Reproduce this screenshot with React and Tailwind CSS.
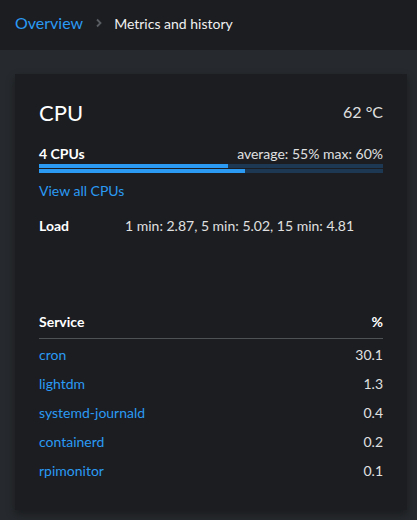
const services = [
  { name: "cron", value: "30.1" },
  { name: "lightdm", value: "1.3" },
  { name: "systemd-journald", value: "0.4" },
  { name: "containerd", value: "0.2" },
  { name: "rpimonitor", value: "0.1" },
];

function Bar({ percent }) {
  return (
    <div className="h-[4px] w-full bg-[#1d3852]">
      <div className="h-full bg-[#2b9af3]" style={{ width: `${percent}%` }} />
    </div>
  );
}

export default function App() {
  return (
    <div className="min-h-[520px] bg-[#26292d] font-['Lato',sans-serif] text-[#e0e0e0]">
      {/* Breadcrumb */}
      <div className="flex h-[50px] items-center bg-[#1b1d21] px-[15px] pb-[4px]">
        <a className="text-[16px] text-[#2b9af3]">Overview</a>
        <svg className="ml-[13px] mr-[12px] h-[10px] w-[6px] text-[#5a5e63]" viewBox="0 0 6 10">
          <path d="M1 1.5 L4.5 5 L1 8.5" fill="none" stroke="currentColor" strokeWidth="1.8" />
        </svg>
        <span className="text-[14px] text-[#f0f0f0]">Metrics and history</span>
      </div>

      <div className="pl-[15px] pr-[10px] pt-[24px] pb-[12px]">
        <div className="bg-[#1b1d21] px-6 pt-6 pb-[26px] shadow-[0_4px_8px_rgba(0,0,0,0.35)]">
          <div className="flex h-[28px] items-center justify-between">
            <h2 className="text-[22px] text-white">CPU</h2>
            <span className="text-[16px]">62 °C</span>
          </div>

          <div className="mt-[17px] flex h-[21px] items-center justify-between text-[14px]">
            <span className="font-bold text-white">4 CPUs</span>
            <span>average: 55% max: 60%</span>
          </div>
          <div className="flex flex-col gap-[1px]">
            <Bar percent={55} />
            <Bar percent={60} />
          </div>
          <a className="mt-[7px] block h-[21px] text-[14px] leading-[21px] text-[#2b9af3]">View all CPUs</a>

          <div className="mt-[14px] flex h-[21px] items-center text-[14px]">
            <span className="w-[86px] font-bold text-white">Load</span>
            <span>1 min: 2.87, 5 min: 5.02, 15 min: 4.81</span>
          </div>

          <div className="mt-[75px] flex h-[21px] items-center justify-between text-[14px] font-bold text-white">
            <span>Service</span>
            <span>%</span>
          </div>
          <div className="mt-[6px] border-t border-[#4f5255]">
            {services.map((s) => (
              <div key={s.name} className="flex h-[29px] items-center justify-between pt-[1px] text-[14px]">
                <a className="text-[#2b9af3]">{s.name}</a>
                <span>{s.value}</span>
              </div>
            ))}
          </div>
        </div>
      </div>
    </div>
  );
}
